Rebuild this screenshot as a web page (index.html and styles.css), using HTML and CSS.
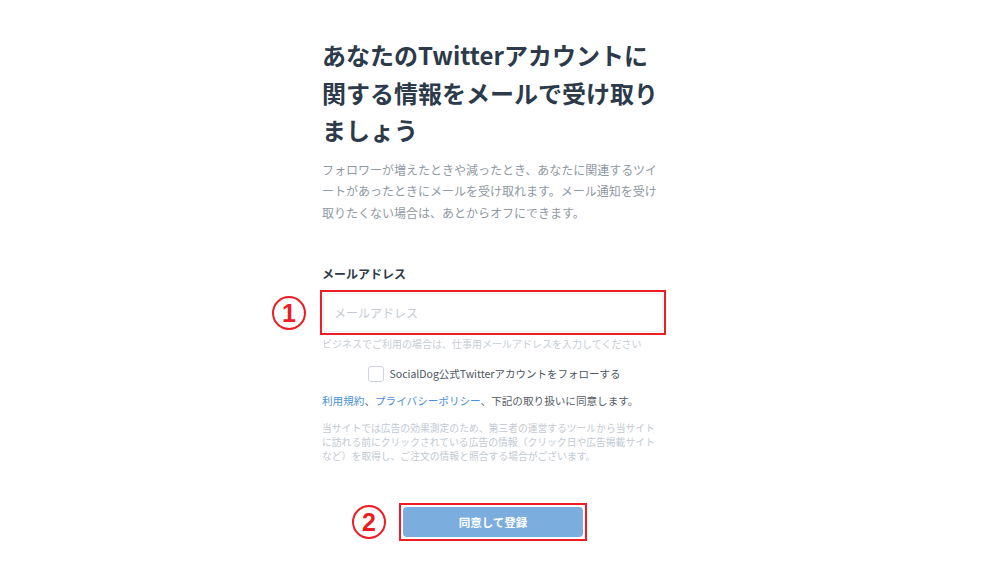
FILE: index.html
```html
<!DOCTYPE html>
<html lang="ja">
<head>
    <meta charset="UTF-8">
    <meta name="viewport" content="width=device-width, initial-scale=1.0">
    <title>SocialDog - メール登録</title>
    <link rel="stylesheet" href="styles.css">
</head>
<body>
    <main class="page">
        <section class="signup">
            <h1 class="title">あなたのTwitterアカウントに<br>関する情報をメールで受け取り<br>ましょう</h1>
            <p class="lead">フォロワーが増えたときや減ったとき、あなたに関連するツイ<br>ートがあったときにメールを受け取れます。メール通知を受け<br>取りたくない場合は、あとからオフにできます。</p>

            <label class="field-label" for="email">メールアドレス</label>
            <div class="field">
                <span class="step step-input">1</span>
                <div class="mark">
                    <input type="email" id="email" class="email-input" placeholder="メールアドレス">
                </div>
            </div>
            <p class="hint">ビジネスでご利用の場合は、仕事用メールアドレスを入力してください</p>

            <label class="follow">
                <input type="checkbox" class="follow-check">
                <span class="box"></span>
                <span>SocialDog公式Twitterアカウントをフォローする</span>
            </label>

            <p class="terms"><a href="#">利用規約</a>、<a href="#">プライバシーポリシー</a>、下記の取り扱いに同意します。</p>

            <p class="notice">当サイトでは広告の効果測定のため、第三者の運営するツールから当サイト<br>に訪れる前にクリックされている広告の情報（クリック日や広告掲載サイト<br>など）を取得し、ご注文の情報と照合する場合がございます。</p>

            <div class="submit">
                <span class="step step-button">2</span>
                <div class="mark">
                    <button class="submit-btn" type="button">同意して登録</button>
                </div>
            </div>
        </section>
    </main>
</body>
</html>
```

FILE: styles.css
```css
/* Reset */
* {
    margin: 0;
    padding: 0;
    box-sizing: border-box;
    font-family: "Noto Sans CJK JP", "Noto Sans", sans-serif;
}

body {
    background-color: #ffffff;
    color: #2c3a4a;
}

/* Page */
.page {
    width: 1000px;
    padding-top: 36px;
}

.signup {
    width: 344px;
    margin-left: 322px;
    display: flex;
    flex-direction: column;
}

/* Heading */
.title {
    font-size: 24px;
    font-weight: bold;
    line-height: 37.5px;
    color: #2c3a4a;
}

.lead {
    margin-top: 10px;
    font-size: 12px;
    line-height: 21.5px;
    color: #8f99a3;
}

/* Email field */
.field-label {
    margin-top: 42px;
    font-size: 12px;
    font-weight: bold;
    line-height: 18px;
    color: #2c3a4a;
}

.field {
    position: relative;
    margin-top: 7px;
    margin-left: -2px;
}

.mark {
    border: 2px solid #ee1c25;
    padding: 1px;
}

.email-input {
    width: 100%;
    height: 39px;
    padding: 0 10px;
    border: 1px solid #eceff2;
    border-radius: 3px;
    font-size: 12px;
    color: #2c3a4a;
    outline: none;
}

.email-input::placeholder {
    color: #c3c9d0;
}

.hint {
    margin-top: 2px;
    font-size: 10px;
    line-height: 14px;
    color: #c6cdd5;
}

/* Step badges */
.step {
    position: absolute;
    width: 34px;
    height: 34px;
    border: 2px solid #ee1c25;
    border-radius: 50%;
    color: #ee1c25;
    font-family: "Liberation Sans", Arial, sans-serif;
    font-size: 25px;
    font-weight: bold;
    display: flex;
    align-items: center;
    justify-content: center;
}

.step-input {
    left: -48px;
    top: 6px;
}

.step-button {
    left: -47px;
    top: 2px;
}

/* Follow checkbox */
.follow {
    margin-top: 14px;
    display: flex;
    align-items: center;
    justify-content: center;
    gap: 6px;
    font-size: 10.5px;
    line-height: 18px;
    color: #4a5561;
    cursor: pointer;
}

.follow-check {
    display: none;
}

.follow .box {
    width: 16px;
    height: 16px;
    border: 1px solid #cfd4da;
    border-radius: 3px;
    background: #ffffff;
}

/* Terms */
.terms {
    margin-top: 10px;
    font-size: 10.6px;
    line-height: 16px;
    color: #555d66;
}

.terms a {
    color: #4a8fd6;
    text-decoration: none;
}

.notice {
    margin-top: 12px;
    font-size: 9.8px;
    line-height: 14px;
    color: #c2c9d1;
}

/* Submit */
.submit {
    position: relative;
    align-self: center;
    margin-top: 40px;
    margin-left: -2px;
}

.submit .mark {
    padding: 2px;
}

.submit-btn {
    display: block;
    width: 180px;
    height: 30px;
    border: none;
    border-radius: 4px;
    background: #7caddf;
    color: #ffffff;
    font-size: 11.5px;
    font-weight: bold;
    cursor: pointer;
}
```
